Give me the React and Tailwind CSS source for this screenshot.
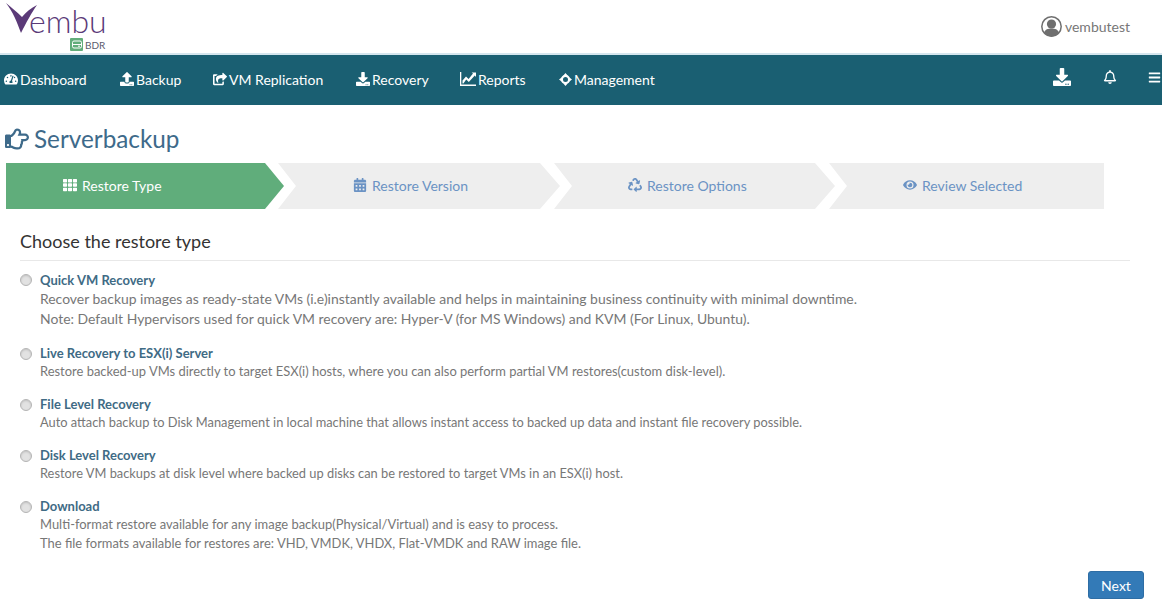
import { FaTachometerAlt, FaUpload, FaShareSquare, FaDownload, FaRegBell, FaBars, FaRegHandPointRight, FaTh, FaCalendarAlt, FaRecycle, FaEye } from 'react-icons/fa';

function ChartIcon({ className }) {
    return (
        <svg width="16" height="14" viewBox="0 0 16 14" fill="white" className={className}>
            <path d="M0 0 H1.3 V12.6 H16 V14 H0 Z" />
            <path d="M2.5 11.5 V8.5 L6 4.6 L8.6 7 L13 1.6 L11.6 0.6 H16 V5 L14.8 3.6 L8.8 10 L6.2 7.6 L3.4 11.5 Z" />
        </svg>
    );
}

function ManageIcon({ className }) {
    return (
        <svg width="13" height="13" viewBox="0 0 13 13" className={className}>
            <circle cx="6.5" cy="6.5" r="3.6" fill="none" stroke="white" strokeWidth="2.2" />
            <path d="M6.5 0 L8.6 2.6 H4.4 Z M6.5 13 L8.6 10.4 H4.4 Z M0 6.5 L2.6 4.4 V8.6 Z M13 6.5 L10.4 4.4 V8.6 Z" fill="white" />
        </svg>
    );
}

function UserIcon() {
    return (
        <svg width="21" height="21" viewBox="0 0 21 21" className="shrink-0">
            <circle cx="10.5" cy="10.5" r="9.7" fill="white" stroke="#6f6f6f" strokeWidth="1.5" />
            <circle cx="10.5" cy="8" r="4.6" fill="#6f6f6f" />
            <path d="M3 17 C4 13.4 7 12.6 10.5 12.6 C14 12.6 17 13.4 18 17 C16 19.4 13.4 20.4 10.5 20.4 C7.6 20.4 5 19.4 3 17 Z" fill="#6f6f6f" />
        </svg>
    );
}

const navItems = [
    { label: 'Dashboard', icon: FaTachometerAlt, cls: 'w-[116px] pl-[4px]' },
    { label: 'Backup', icon: FaUpload, cls: 'w-[94px] pl-[4px]' },
    { label: 'VM Replication', icon: FaShareSquare, cls: 'w-[142px] pl-[3px]' },
    { label: 'Recovery', icon: FaDownload, cls: 'w-[104px] pl-[4px]' },
    { label: 'Reports', icon: ChartIcon, cls: 'w-[98px] pl-[4px]' },
    { label: 'Management', icon: ManageIcon, cls: 'pl-[5px]' },
];

const options = [
    {
        title: 'Quick VM Recovery',
        text: 'text-[13.93px] leading-[20px]',
        head: 'leading-[18px]',
        extra: 'mb-[1px]',
        lines: [
            'Recover backup images as ready-state VMs (i.e)instantly available and helps in maintaining business continuity with minimal downtime.',
            'Note: Default Hypervisors used for quick VM recovery are: Hyper-V (for MS Windows) and KVM (For Linux, Ubuntu).',
        ],
    },
    {
        title: 'Live Recovery to ESX(i) Server',
        text: 'text-[12.95px] leading-[20px]',
        head: 'leading-[16px]',
        lines: ['Restore backed-up VMs directly to target ESX(i) hosts, where you can also perform partial VM restores(custom disk-level).'],
    },
    {
        title: 'File Level Recovery',
        text: 'text-[12.83px] leading-[20px]',
        head: 'leading-[16px]',
        lines: ['Auto attach backup to Disk Management in local machine that allows instant access to backed up data and instant file recovery possible.'],
    },
    {
        title: 'Disk Level Recovery',
        text: 'text-[12.83px] leading-[20px]',
        head: 'leading-[16px]',
        lines: ['Restore VM backups at disk level where backed up disks can be restored to target VMs in an ESX(i) host.'],
    },
    {
        title: 'Download',
        text: 'text-[12.95px] leading-[19px]',
        head: 'leading-[17px]',
        lines: [
            'Multi-format restore available for any image backup(Physical/Virtual) and is easy to process.',
            'The file formats available for restores are: VHD, VMDK, VHDX, Flat-VMDK and RAW image file.',
        ],
    },
];

function Logo() {
    return (
        <div className="ml-[5px] pt-[3px] w-[106px]">
            <div className="flex h-[32px]">
                <svg width="33" height="31" viewBox="0 0 33 31" className="shrink-0">
                    <path d="M1 0 C6 4 12 9 17 14 C21 9 26 5 32 2 C27 9 21 20 16 30 C12 19 8 9 1 0 Z" fill="#5b3a78" />
                </svg>
                <span className="-ml-[9px] pt-[2px] text-[32px] leading-[32px] font-light text-[#5b3a78]">embu</span>
            </div>
            <div className="flex items-center gap-[2px] h-[13px] ml-[65px] mt-[3px]">
                <span className="w-[13px] h-[13px] bg-[#62ad7a] flex items-center justify-center rounded-[1px] shrink-0">
                    <svg width="10" height="9" viewBox="0 0 10 9" fill="none" stroke="white" strokeWidth="1">
                        <rect x="0.5" y="1" width="9" height="7" rx="1.5" />
                        <path d="M0.5 4.5 H9.5 M6 6.2 H8" />
                    </svg>
                </span>
                <span className="text-[10px] leading-none text-[#5c5c6e]">BDR</span>
            </div>
        </div>
    );
}

function Step({ icon: Icon, label, active, cls }) {
    return (
        <div className={`h-[46px] pb-[2px] flex items-center gap-[5px] text-[14px] ${active ? 'bg-[#60ad7b] text-white' : 'bg-[#eeeeee] text-[#6b93c4]'} ${cls}`}>
            <Icon className="text-[14px] shrink-0" />
            <span>{label}</span>
        </div>
    );
}

export default function App() {
    return (
        <div className="w-[1162px] h-[605px] overflow-hidden bg-white font-['Lato','Open_Sans',sans-serif]">
            {/* header */}
            <div className="h-[55px] flex justify-between border-b-2 border-[#d5e6ee]">
                <Logo />
                <div className="flex items-center gap-[3px] pr-[32px] pb-[1px] text-[14px] text-[#777777]">
                    <UserIcon />
                    vembutest
                </div>
            </div>

            {/* nav */}
            <div className="h-[50px] bg-[#1a5f72] flex items-center justify-between text-white">
                <div className="flex items-center pb-[2px] text-[14px]">
                    {navItems.map(({ label, icon: Icon, cls }) => (
                        <div key={label} className={`flex items-center gap-[2px] ${cls}`}>
                            <Icon className="text-[14px] shrink-0" />
                            <span>{label}</span>
                        </div>
                    ))}
                </div>
                <div className="flex items-center pb-[6px]">
                    <FaDownload className="text-[18px] mr-[32px]" />
                    <FaRegBell className="text-[14px] mr-[31px]" />
                    <FaBars className="text-[13px] mr-[1px] w-[13px]" />
                </div>
            </div>

            {/* title */}
            <div className="h-[58px] pl-[5px] flex items-center gap-[5px] pt-[10px] text-[#3e6a8a]">
                <FaRegHandPointRight className="text-[24px]" />
                <h1 className="text-[24.3px]">Serverbackup</h1>
            </div>

            {/* steps */}
            <div className="flex ml-[6px]">
                <Step active icon={FaTh} label="Restore Type" cls="w-[278px] pl-[57px] [clip-path:polygon(0_0,259px_0,100%_50%,259px_100%,0_100%)]" />
                <Step icon={FaCalendarAlt} label="Restore Version" cls="w-[282px] -ml-[6px] pl-[75px] [clip-path:polygon(0_0,262px_0,100%_50%,262px_100%,0_100%,18px_50%)]" />
                <Step icon={FaRecycle} label="Restore Options" cls="w-[281px] -ml-[6px] pl-[74px] [clip-path:polygon(0_0,261px_0,100%_50%,261px_100%,0_100%,18px_50%)]" />
                <Step icon={FaEye} label="Review Selected" cls="w-[275px] -ml-[6px] pl-[74px] [clip-path:polygon(0_0,100%_0,100%_100%,0_100%,18px_50%)]" />
            </div>

            {/* form */}
            <div className="mx-[20px] w-[1110px] mt-[20px]">
                <h2 className="text-[18px] leading-[24px] text-[#333333] pb-[7px] border-b border-[#e8e8e8]">Choose the restore type</h2>
                <div className="mt-[10px] flex flex-col gap-[15px]">
                    {options.map((o) => (
                        <div key={o.title} className={`flex ${o.extra || ''}`}>
                            <span className="mt-[3px] w-[12px] h-[12px] rounded-full shrink-0 border border-[#b5b5b5] bg-[#e2e2e2] shadow-[inset_0_1px_2px_rgba(0,0,0,0.15)]" />
                            <div className="ml-[8px]">
                                <div className={`text-[13px] font-bold text-[#3f6b85] ${o.head}`}>{o.title}</div>
                                {o.lines.map((l) => (
                                    <p key={l} className={`text-[#777777] ${o.text}`}>{l}</p>
                                ))}
                            </div>
                        </div>
                    ))}
                </div>
            </div>

            <div className="flex justify-end pr-[18px] mt-[18px]">
                <button className="w-[56px] h-[28px] rounded-[3px] bg-[#337ab7] text-white text-[14px] border border-[#2e6da4]">Next</button>
            </div>
        </div>
    );
}
